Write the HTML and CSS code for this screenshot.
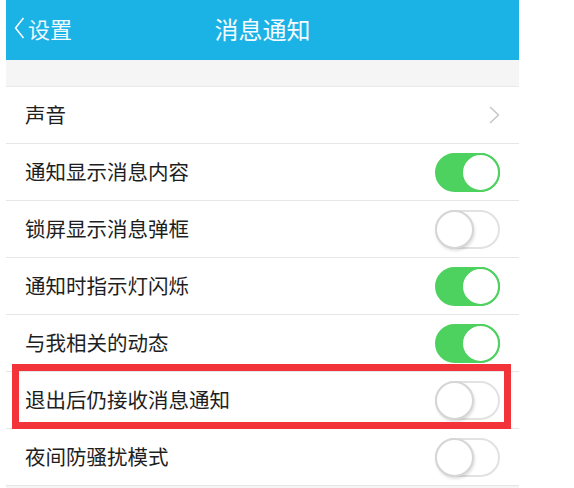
FILE: index.html
```html
<!DOCTYPE html>
<html>
<head>
<meta charset="utf-8">
<title>消息通知</title>
<link rel="stylesheet" href="styles.css">
</head>
<body>
  <div id="phone">
    <div id="header">
      <div class="back">
        <svg width="11" height="22" viewBox="0 0 11 22"><path d="M9.5 1 L1.5 11 L9.5 21" fill="none" stroke="#fff" stroke-width="1.5"/></svg>
        <span>设置</span>
      </div>
      <div class="title">消息通知</div>
    </div>
    <div class="gap"></div>
    <div class="list">
      <div class="row">
        <span class="label">声音</span>
        <svg class="chev" width="11" height="18" viewBox="0 0 11 18"><path d="M1 1 L9.5 9 L1 17" fill="none" stroke="#c4c4c4" stroke-width="1.4"/></svg>
      </div>
      <div class="row">
        <span class="label">通知显示消息内容</span>
        <span class="toggle on"><span class="knob"></span></span>
      </div>
      <div class="row">
        <span class="label">锁屏显示消息弹框</span>
        <span class="toggle"><span class="knob"></span></span>
      </div>
      <div class="row">
        <span class="label">通知时指示灯闪烁</span>
        <span class="toggle on"><span class="knob"></span></span>
      </div>
      <div class="row">
        <span class="label">与我相关的动态</span>
        <span class="toggle on"><span class="knob"></span></span>
      </div>
      <div class="row marked">
        <span class="label">退出后仍接收消息通知</span>
        <span class="toggle"><span class="knob"></span></span>
        <div class="redbox"></div>
      </div>
      <div class="row">
        <span class="label">夜间防骚扰模式</span>
        <span class="toggle"><span class="knob"></span></span>
      </div>
    </div>
    <div class="foot"></div>
  </div>
</body>
</html>
```
FILE: styles.css
```css
body {
margin: 0;
background-color: #ffffff;
font-family: "Noto Sans CJK SC", "Noto Sans", sans-serif;
}

#phone {
width: 513px;
margin-left: 6px;
}

#header {
height: 60px;
background-color: #1bb2e6;
color: #ffffff;
display: flex;
align-items: center;
justify-content: center;
position: relative;
}

.back {
position: absolute;
left: 8px;
top: 0;
height: 56px;
display: flex;
align-items: center;
gap: 3px;
font-size: 22px;
color: #eef9fd;
}

.title {
font-size: 24px;
margin-top: -4px;
color: #f4fbfe;
}

.gap {
height: 26px;
background-color: #f4f5f4;
border-bottom: 1px solid #e9eaea;
}

.row {
height: 56px;
border-bottom: 1px solid #e6e6e6;
display: flex;
align-items: center;
justify-content: space-between;
padding-left: 19px;
padding-right: 19px;
position: relative;
}

.label {
font-size: 20.5px;
color: #1e1e1e;
margin-top: -2px;
}

.toggle {
width: 65px;
height: 39px;
box-sizing: border-box;
border-radius: 20px;
border: 2px solid #e2e2e2;
background-color: #ffffff;
position: relative;
}

.toggle .knob {
position: absolute;
top: -2px;
left: -2px;
width: 39px;
height: 39px;
box-sizing: border-box;
border-radius: 50%;
background-color: #ffffff;
border: 2px solid #d6d6d6;
box-shadow: 1px 2px 3px rgba(0, 0, 0, 0.12);
}

.toggle.on {
background-color: #4dd15f;
border-color: #4dd15f;
}

.toggle.on .knob {
left: auto;
right: -2px;
border-color: #4dd15f;
box-shadow: none;
}

.redbox {
position: absolute;
left: 6px;
right: 8px;
top: -8px;
bottom: -1px;
border: 7px solid #f2343a;
}

.foot {
height: 3px;
background-color: #f4f5f4;
}
```
